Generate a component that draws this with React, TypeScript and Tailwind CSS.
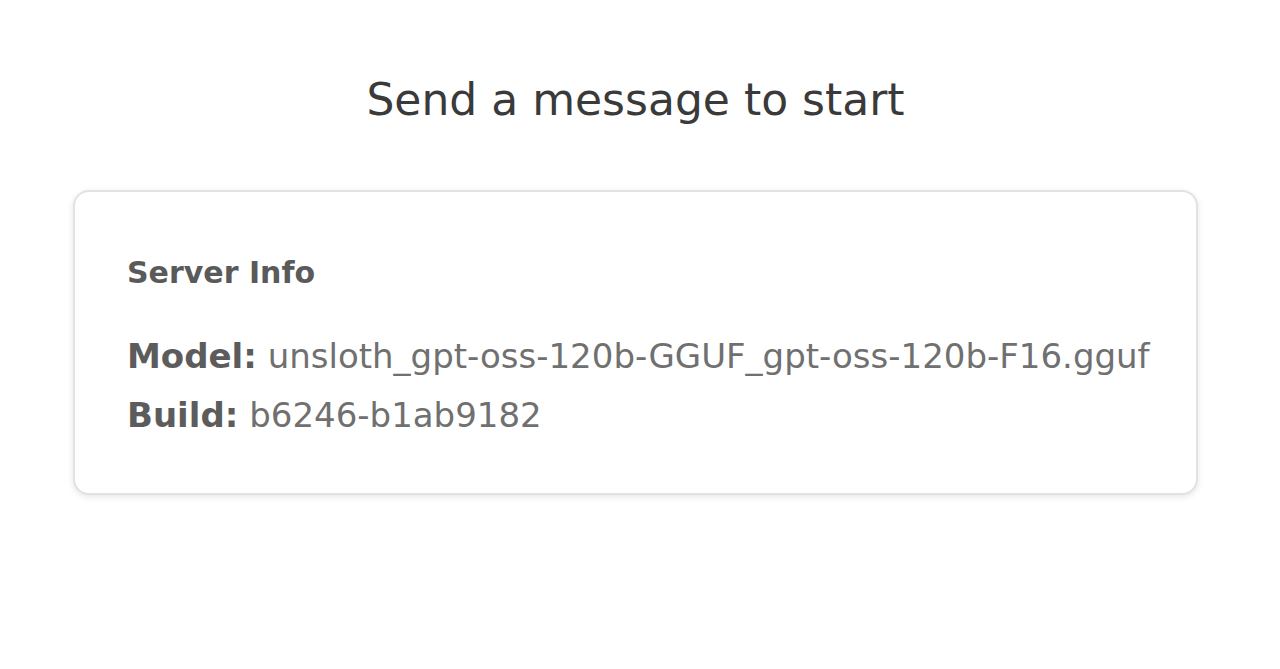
import React from 'react';

const App = () => {
  return (
    <div className="min-h-[669px] w-full bg-white font-['DejaVu_Sans',sans-serif]">
      <div className="flex flex-col items-center pl-[73px] pr-[82px] pt-[70px]">
        <h1 className="text-[44px] leading-[60px] text-[#3a3a3a]">Send a message to start</h1>

        <div className="mt-[60px] w-full rounded-[16px] border-2 border-[#e2e2e2] bg-white pl-[52px] pr-[36px] pt-[59px] pb-[48px] shadow-[0_2px_6px_rgba(0,0,0,0.10)]">
          <h2 className="text-[30px] leading-[44px] font-bold text-[#5a5a5a]">Server Info</h2>
          <div className="mt-[32px] text-[34px] leading-[59px] text-[#707070] whitespace-nowrap">
            <p>
              <span className="font-bold text-[#5c5c5c]">Model:</span> unsloth_gpt-oss-120b-GGUF_gpt-oss-120b-F16.gguf
            </p>
            <p>
              <span className="font-bold text-[#5c5c5c]">Build:</span> b6246-b1ab9182
            </p>
          </div>
        </div>
      </div>
    </div>
  );
};

export default App;
